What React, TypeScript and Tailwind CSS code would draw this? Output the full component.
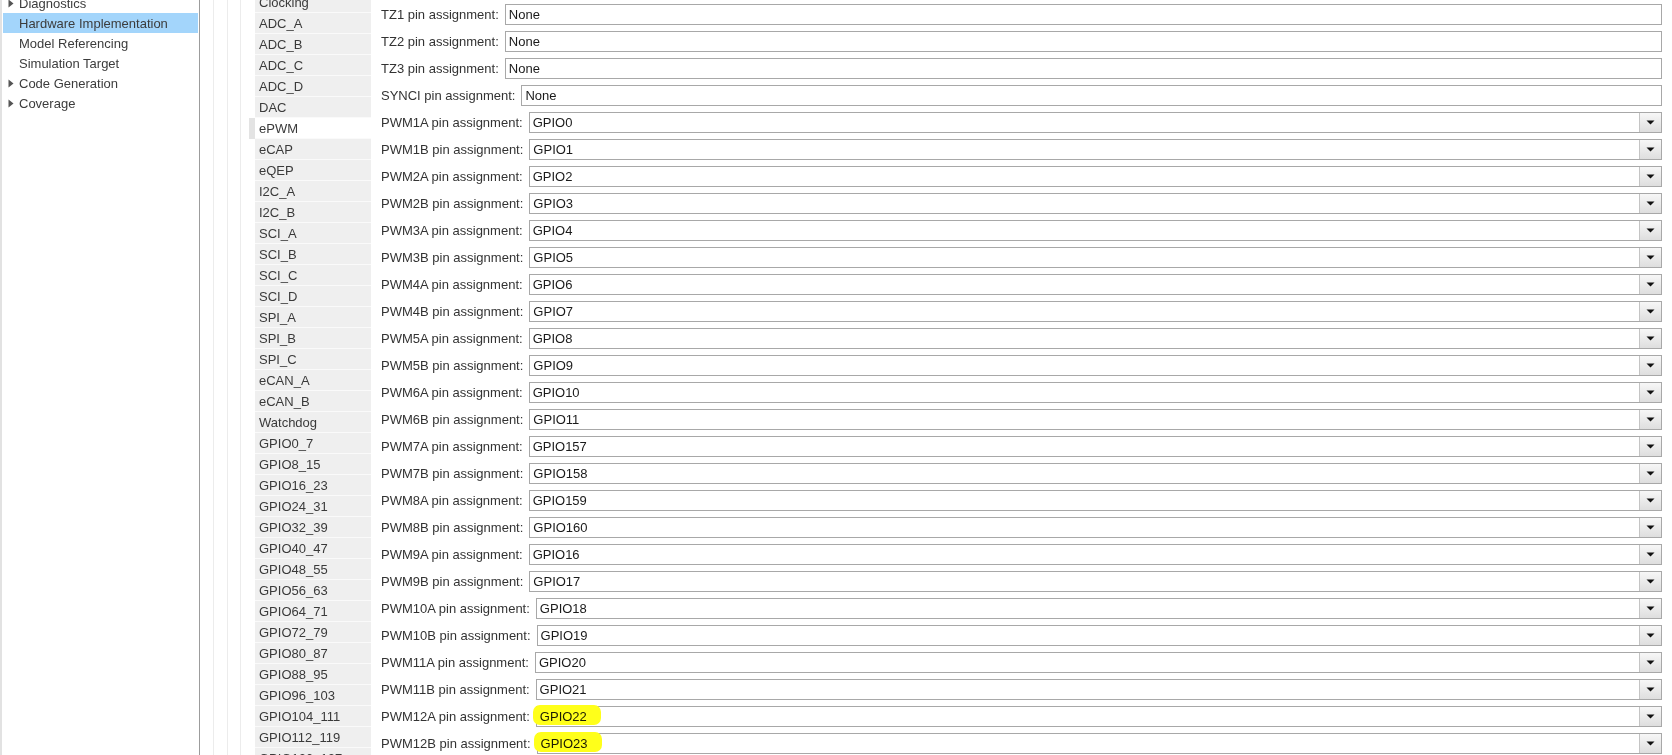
import React from "react";

const navItems: { label: string; arrow?: boolean; selected?: boolean }[] = [
  { label: "Diagnostics", arrow: true },
  { label: "Hardware Implementation", selected: true },
  { label: "Model Referencing" },
  { label: "Simulation Target" },
  { label: "Code Generation", arrow: true },
  { label: "Coverage", arrow: true },
];

const listItems = [
  "Clocking", "ADC_A", "ADC_B", "ADC_C", "ADC_D", "DAC", "ePWM", "eCAP", "eQEP",
  "I2C_A", "I2C_B", "SCI_A", "SCI_B", "SCI_C", "SCI_D", "SPI_A", "SPI_B", "SPI_C",
  "eCAN_A", "eCAN_B", "Watchdog", "GPIO0_7", "GPIO8_15", "GPIO16_23", "GPIO24_31",
  "GPIO32_39", "GPIO40_47", "GPIO48_55", "GPIO56_63", "GPIO64_71", "GPIO72_79",
  "GPIO80_87", "GPIO88_95", "GPIO96_103", "GPIO104_111", "GPIO112_119", "GPIO120_127",
];

type Field = { label: string; value: string; dropdown: boolean; highlight?: boolean };

const pwmValues = [
  "GPIO0", "GPIO1", "GPIO2", "GPIO3", "GPIO4", "GPIO5", "GPIO6", "GPIO7", "GPIO8", "GPIO9",
  "GPIO10", "GPIO11", "GPIO157", "GPIO158", "GPIO159", "GPIO160", "GPIO16", "GPIO17",
  "GPIO18", "GPIO19", "GPIO20", "GPIO21", "GPIO22", "GPIO23",
];

const fields: Field[] = [
  { label: "TZ1 pin assignment:", value: "None", dropdown: false },
  { label: "TZ2 pin assignment:", value: "None", dropdown: false },
  { label: "TZ3 pin assignment:", value: "None", dropdown: false },
  { label: "SYNCI pin assignment:", value: "None", dropdown: false },
  ...pwmValues.map((v, i) => ({
    label: `PWM${Math.floor(i / 2) + 1}${i % 2 === 0 ? "A" : "B"} pin assignment:`,
    value: v,
    dropdown: true,
    highlight: i >= 22,
  })),
];

function RightTriangle() {
  return (
    <svg width="6" height="9" viewBox="0 0 6 9" className="shrink-0">
      <path d="M0.5 0.5 L5.5 4.5 L0.5 8.5 Z" fill="#555555" />
    </svg>
  );
}

function DownTriangle() {
  return (
    <svg width="9" height="5" viewBox="0 0 9 5">
      <path d="M0.5 0.5 L8.5 0.5 L4.5 4.5 Z" fill="#111111" />
    </svg>
  );
}

export default function App() {
  return (
    <div
      className="flex h-[755px] w-[1672px] overflow-hidden bg-white text-[13px] leading-none"
      style={{ fontFamily: '"Liberation Sans", Arial, sans-serif' }}
    >
      {/* Left navigation tree */}
      <div className="flex h-full w-[200px] shrink-0 flex-col border-l-2 border-r border-l-[#e2e2e2] border-r-[#9c9c9c] bg-white pl-px pr-px">
        <div className="mt-[-7px] flex flex-col">
          {navItems.map((n) => (
            <div
              key={n.label}
              className={`flex h-[20px] items-center text-[#3c3c3c] ${n.selected ? "bg-[#a3d5fb]" : ""}`}
            >
              <div className="flex w-[16px] items-center justify-start pl-[5px]">
                {n.arrow ? <RightTriangle /> : null}
              </div>
              <span className="whitespace-nowrap">{n.label}</span>
            </div>
          ))}
        </div>
      </div>

      {/* Gutter with faint lines */}
      <div className="flex h-full shrink-0">
        <div className="h-full w-[14px] border-r border-[#ececec]" />
        <div className="h-full w-[14px] border-r border-[#ececec]" />
        <div className="h-full w-[13px] border-r border-[#ececec]" />
        <div className="h-full w-[8px]" />
      </div>

      {/* Category list */}
      <div className="flex h-full w-[122px] shrink-0 flex-col">
        <div className="mt-[-8px] flex flex-col">
          {listItems.map((item) => {
            const sel = item === "ePWM";
            return (
              <div key={item} className="flex h-[21px]">
                <div className={`h-full w-[6px] ${sel ? "bg-[#e3e3e3]" : ""}`} />
                <div
                  className={`flex h-full flex-1 items-center border-b border-[#fafafa] pl-[4px] text-[#3a3a3a] ${
                    sel ? "bg-white" : "bg-[#efefef]"
                  }`}
                >
                  <span className="whitespace-nowrap">{item}</span>
                </div>
              </div>
            );
          })}
        </div>
      </div>

      {/* Fields */}
      <div className="flex h-full min-w-0 flex-1 flex-col gap-[6px] pl-[10px] pr-[10px] pt-[4px]">
        {fields.map((f) => (
          <div key={f.label} className="flex h-[21px] shrink-0 items-center">
            <span className="mr-[6px] whitespace-nowrap text-[#333333]">{f.label}</span>
            <div className="relative flex h-[21px] flex-1 items-center border border-[#a8a8a8] bg-white">
              {f.highlight ? (
                <div className="pointer-events-none absolute left-[-4px] top-[-2px] h-[20px] w-[68px] rounded-[7px] bg-[#ffff1a]" />
              ) : null}
              <span className="relative flex-1 whitespace-nowrap pl-[3px] text-[#1a1a1a] mix-blend-multiply">
                {f.value}
              </span>
              {f.dropdown ? (
                <div className="flex h-full w-[22px] items-center justify-center border-l border-[#c4c4c4] bg-gradient-to-b from-[#f7f7f7] to-[#dedede]">
                  <DownTriangle />
                </div>
              ) : null}
            </div>
          </div>
        ))}
      </div>
    </div>
  );
}
